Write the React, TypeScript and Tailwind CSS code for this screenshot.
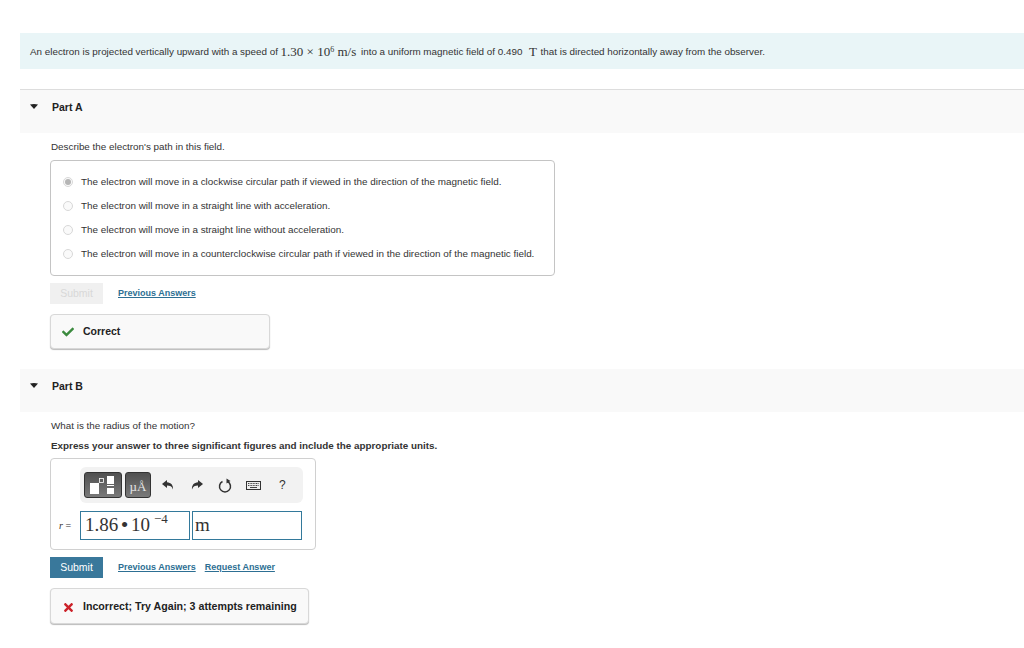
import { FaCheck, FaTimes } from "react-icons/fa";

const sans = { fontFamily: '"Liberation Sans", Arial, sans-serif' };
const serif = { fontFamily: '"Liberation Serif", serif' };

const options = [
  "The electron will move in a clockwise circular path if viewed in the direction of the magnetic field.",
  "The electron will move in a straight line with acceleration.",
  "The electron will move in a straight line without acceleration.",
  "The electron will move in a counterclockwise circular path if viewed in the direction of the magnetic field.",
];

function PartHeader({ label, className }: { label: string; className: string }) {
  return (
    <div className={`flex items-start bg-[#f9f9f9] pl-[10px] ${className}`}>
      <svg width="8" height="5" viewBox="0 0 8 5" className="mt-[3px] shrink-0">
        <path d="M0 0.500Q4 -0.300 8 0.500L4 5Z" fill="#222" />
      </svg>
      <span className="ml-[14px] text-[10.500px] leading-[12px] font-bold text-[#222]">{label}</span>
    </div>
  );
}

function Toolbar() {
  return (
    <div className="flex h-[36px] w-[223px] items-center rounded-[6px] bg-[#f2f2f2] pl-[4px]">
      <div className="h-[26px] w-[38px] overflow-hidden rounded-[3px] border border-[#333] bg-gradient-to-b from-[#505050] to-[#7a7a7a]">
        <svg width="36" height="24" viewBox="0 0 36 24">
          <rect x="5" y="10" width="9" height="11" fill="#fff" />
          <rect x="14.500" y="5.500" width="4" height="4" fill="none" stroke="#fff" strokeWidth="0.800" />
          <rect x="22" y="3" width="7" height="8" fill="#fff" />
          <rect x="22" y="12" width="7" height="1" fill="#fff" />
          <rect x="22" y="15" width="7" height="6" fill="#fff" />
        </svg>
      </div>
      <div
        className="ml-[3px] flex h-[26px] w-[26px] items-center justify-center rounded-[3px] border border-[#333] bg-gradient-to-b from-[#505050] to-[#7a7a7a] pt-[3px] text-[13px] text-[#e5e5e5]"
        style={serif}
      >
        µÅ
      </div>
      <svg width="14" height="12" viewBox="0 0 14 12" className="ml-[10px]">
        <path d="M6 1 1 5l5 4V6.600c3 0 5 1 6 3.900.4-4.400-2-7-6-7.300Z" fill="#333" />
      </svg>
      <svg width="14" height="12" viewBox="0 0 14 12" className="ml-[15px]">
        <path d="M8 1l5 4-5 4V6.600c-3 0-5 1-6 3.900C1.600 6.100 4 3.500 8 3.200Z" fill="#333" />
      </svg>
      <svg width="14" height="15" viewBox="0 0 14 15" className="ml-[14px]">
        <path d="M4.500 3.500a5.500 5.500 0 1 0 5 0" fill="none" stroke="#333" strokeWidth="1.500" />
        <path d="M8.500 0.500v5l4-2.500Z" fill="#333" />
      </svg>
      <svg width="15" height="9" viewBox="0 0 15 9" className="ml-[14px]">
        <rect x="0.500" y="0.500" width="14" height="8" fill="#eee" stroke="#333" />
        <path d="M2 2.500h11M2 4.500h11" stroke="#444" strokeDasharray="1 0.600" />
        <path d="M4 6.500h7" stroke="#444" />
      </svg>
      <span className="ml-[18px] text-[12px] text-[#333]">?</span>
    </div>
  );
}

export default function App() {
  return (
    <div className="h-[648px] w-[1024px] overflow-hidden bg-white pt-[33px] pl-[20px] text-[#333]" style={sans}>
      <div className="flex h-[36px] items-center bg-[#e9f5f7] pt-[2px] pl-[10px] text-[9.850px] text-[#333]">
        <span>An electron is projected vertically upward with a speed of&nbsp;</span>
        <span className="text-[13px] whitespace-pre" style={serif}>
          1.30 × 10<sup className="text-[8px]">6</sup> m/s
        </span>
        <span className="ml-[2px]">&nbsp;into a uniform magnetic field of 0.490&nbsp;&nbsp;</span>
        <span className="ml-[1px] text-[13px]" style={serif}>T</span>
        <span className="ml-[1px]">&nbsp;that is directed horizontally away from the observer.</span>
      </div>

      <PartHeader label="Part A" className="mt-[20px] h-[44px] border-t border-[#ddd] pt-[11px]" />

      <div className="pl-[30px]">
        <p className="mt-[7px] pl-[1px] text-[9.850px] leading-[13px]">Describe the electron's path in this field.</p>

        <div className="mt-[7px] flex h-[116px] w-[505px] flex-col gap-[12px] rounded-[4px] border border-[#c4c4c4] pt-[15px] pl-[12px]">
          {options.map((o, i) => (
            <div key={o} className="flex h-[12px] items-center text-[9.900px]">
              <span className="flex h-[10px] w-[10px] shrink-0 items-center justify-center rounded-full border border-[#d8d8d8] bg-[#fafafa]">
                {i === 0 && <span className="h-[6px] w-[6px] rounded-full bg-[#b5b5b5]" />}
              </span>
              <span className="ml-[8px] whitespace-nowrap">{o}</span>
            </div>
          ))}
        </div>

        <div className="mt-[7px] flex items-center">
          <div className="flex h-[21px] w-[53px] items-center justify-center bg-[#f0f0f0] text-[10.500px] text-[#d8d8d8]">Submit</div>
          <a className="ml-[15px] text-[9px] font-bold text-[#2d6f93] underline">Previous Answers</a>
        </div>

        <div className="mt-[10px] flex h-[35px] w-[220px] items-center rounded-[4px] border border-[#d8d8d8] bg-[#f9f9f9] pl-[11px] shadow-[0_1px_1px_#bbb]">
          <FaCheck size={12} className="text-[#3b8a3e]" />
          <span className="ml-[9px] text-[10.500px] font-bold text-[#222]">Correct</span>
        </div>
      </div>

      <PartHeader label="Part B" className="mt-[20px] h-[43px] pt-[11px]" />

      <div className="pl-[30px]">
        <p className="mt-[7px] pl-[1px] text-[9.850px] leading-[13px]">What is the radius of the motion?</p>
        <p className="mt-[8px] pl-[1px] text-[9.860px] leading-[12px] font-bold text-[#333]">Express your answer to three significant figures and include the appropriate units.</p>

        <div className="mt-[6px] flex h-[92px] w-[266px] flex-col rounded-[4px] border border-[#d0d0d0] pt-[8px]">
          <div className="ml-[29px]">
            <Toolbar />
          </div>
          <div className="mt-[8px] flex items-center" style={serif}>
            <span className="ml-[8px] w-[21px] text-[10px] whitespace-pre"><i>r</i> =</span>
            <div className="flex h-[29px] w-[110px] items-center border border-[#33799b] pl-[4px] text-[19px] text-[#333]">
              1.86 <span className="mx-[3px]" style={sans}>•</span> 10<sup className="ml-[4px] text-[13px]">−4</sup>
            </div>
            <div className="ml-[2px] flex h-[29px] w-[110px] items-center border border-[#33799b] pl-[2px] text-[19px]">m</div>
          </div>
        </div>

        <div className="mt-[7px] flex items-center">
          <div className="flex h-[21px] w-[53px] items-center justify-center bg-[#39789b] text-[10.500px] text-white">Submit</div>
          <a className="ml-[15px] text-[9px] font-bold text-[#2d6f93] underline">Previous Answers</a>
          <a className="ml-[9px] text-[9px] font-bold text-[#2d6f93] underline">Request Answer</a>
        </div>

        <div className="mt-[10px] flex h-[36px] w-[259px] items-center rounded-[4px] border border-[#d8d8d8] bg-[#f9f9f9] pt-[2px] pl-[11px] shadow-[0_1px_1px_#bbb]">
          <FaTimes size={13} className="text-[#cc2229]" />
          <span className="ml-[8px] text-[10.650px] font-bold whitespace-nowrap text-[#222]">Incorrect; Try Again; 3 attempts remaining</span>
        </div>
      </div>
    </div>
  );
}
